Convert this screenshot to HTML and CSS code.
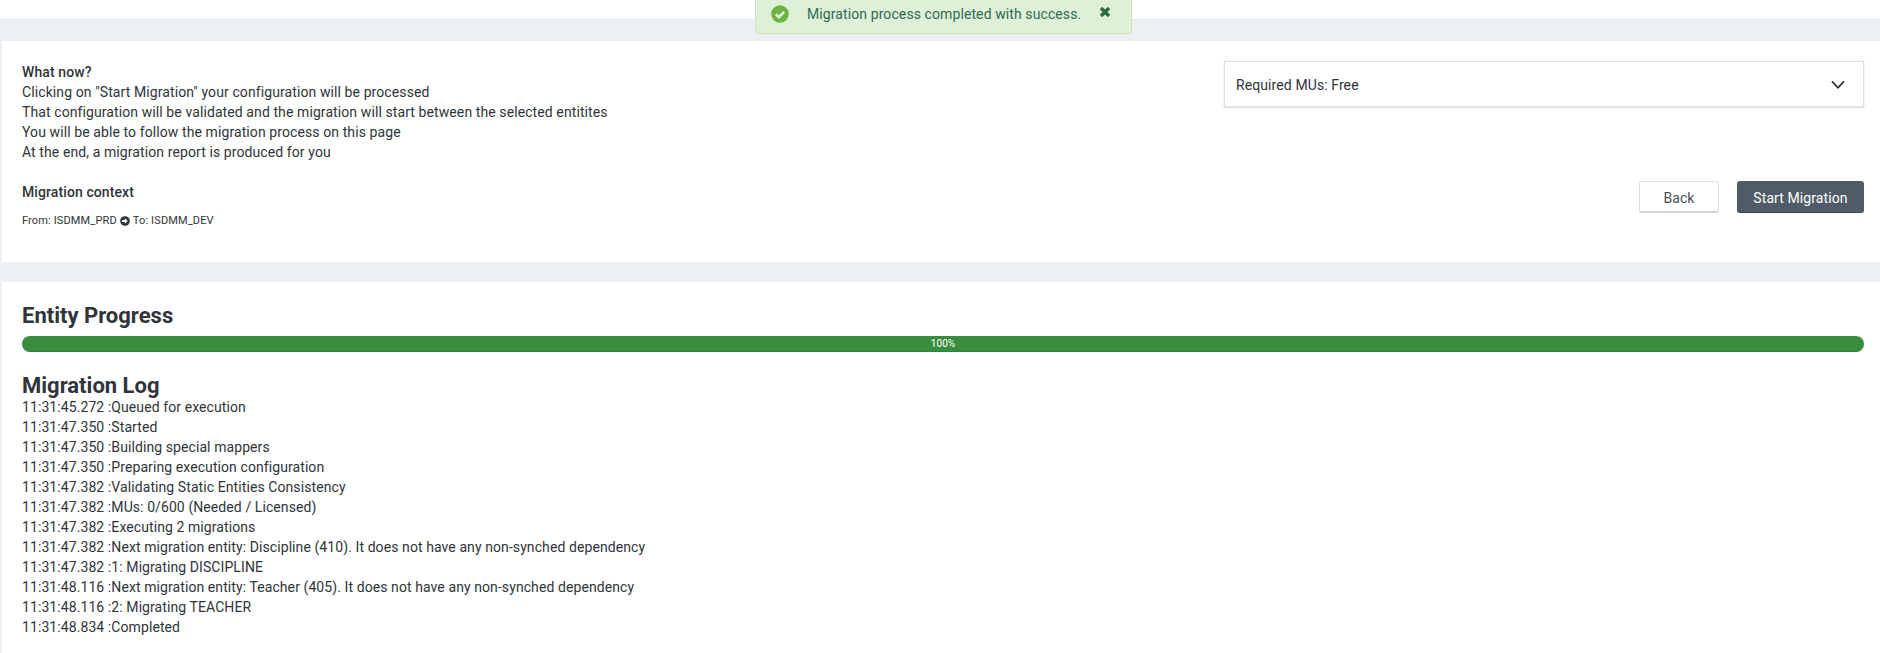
FILE: index.html
```html
<!DOCTYPE html>
<html lang="en">
<head>
<meta charset="utf-8">
<title>Migration</title>
<link rel="stylesheet" href="styles.css">
</head>
<body>
<div class="toast">
  <svg class="toast-icon" viewBox="0 0 18 18"><circle cx="9" cy="9" r="8.8" fill="#6cb33f"/><path d="M4.8 9.2l3 3L13.2 6.9" fill="none" stroke="#e6f3dc" stroke-width="2.6"/></svg>
  <span class="toast-text">Migration process completed with success.</span>
  <svg class="toast-close" viewBox="0 0 12 12"><path d="M2 2l8 8M10 2l-8 8" fill="none" stroke="#2a6b3c" stroke-width="3.4"/></svg>
</div>
<header class="topbar"></header>
<main class="content">
  <section class="card card-setup">
    <div class="intro">
      <p class="strong">What now?</p>
      <p>Clicking on "Start Migration" your configuration will be processed</p>
      <p>That configuration will be validated and the migration will start between the selected entitites</p>
      <p>You will be able to follow the migration process on this page</p>
      <p>At the end, a migration report is produced for you</p>
      <p class="strong context-title">Migration context</p>
      <p class="context"><span>From: ISDMM_PRD</span><svg class="arrow" viewBox="0 0 12 12"><circle cx="6" cy="6" r="5.8" fill="#2f343a"/><path d="M2.6 4.9h3.2V2.8L9.3 6 5.8 9.2V7.1H2.6z" fill="#fff"/></svg><span>To: ISDMM_DEV</span></p>
    </div>
    <div class="side">
      <div class="select">
        <span>Required MUs: Free</span>
        <svg class="chev" viewBox="0 0 14 10"><path d="M1 1.4L7 7.8l6-6.4" fill="none" stroke="#2f343a" stroke-width="1.8"/></svg>
      </div>
      <div class="actions">
        <button class="btn btn-back">Back</button>
        <button class="btn btn-start">Start Migration</button>
      </div>
    </div>
  </section>
  <section class="card card-log">
    <h2 class="h-progress">Entity Progress</h2>
    <div class="progress"><span>100%</span></div>
    <h2 class="h-log">Migration Log</h2>
    <div class="log">
      <div>11:31:45.272 :Queued for execution</div>
      <div>11:31:47.350 :Started</div>
      <div>11:31:47.350 :Building special mappers</div>
      <div>11:31:47.350 :Preparing execution configuration</div>
      <div>11:31:47.382 :Validating Static Entities Consistency</div>
      <div>11:31:47.382 :MUs: 0/600 (Needed / Licensed)</div>
      <div>11:31:47.382 :Executing 2 migrations</div>
      <div>11:31:47.382 :Next migration entity: Discipline (410). It does not have any non-synched dependency</div>
      <div>11:31:47.382 :1: Migrating DISCIPLINE</div>
      <div>11:31:48.116 :Next migration entity: Teacher (405). It does not have any non-synched dependency</div>
      <div>11:31:48.116 :2: Migrating TEACHER</div>
      <div>11:31:48.834 :Completed</div>
    </div>
  </section>
</main>
</body>
</html>
```
FILE: styles.css
```css
* { box-sizing: border-box; }
html, body { margin: 0; height: 100%; }
body {
  height: 653px;
  overflow: hidden;
  background: #ecf0f3;
  color: #2f343a;
  font: 14px/20px Roboto, "Liberation Sans", sans-serif;
  letter-spacing: .095px;
  display: flex;
  flex-direction: column;
}
p { margin: 0; }
.topbar { height: 20px; background: #fff; border-bottom: 1px solid #e1e5e8; flex: none; }
.toast {
  position: absolute;
  left: 755px;
  top: -1px;
  width: 377px;
  height: 35px;
  display: flex;
  align-items: center;
  background: #dff0d8;
  border: 1px solid #cfe3c2;
  border-radius: 0 0 3px 3px;
  color: #2e6b52;
  padding: 0 0 6px 15px;
  z-index: 5;
}
.toast-icon { width: 18px; height: 18px; flex: none; }
.toast-text { margin-left: 18px; font-size: 14px; }
.toast-close { width: 12px; height: 12px; margin-left: 18px; margin-top: -3px; flex: none; }
.content { flex: 1; display: flex; flex-direction: column; gap: 20px; padding: 21px 0 0 2px; }
.card { background: #fff; flex: none; }
.card-setup { height: 221px; display: flex; justify-content: space-between; padding: 21px 16px 0 20px; }
.strong { font-weight: 500; }
.context-title { margin-top: 20px; }
.context { margin-top: 9px; font-size: 11px; letter-spacing: .14px; display: flex; align-items: center; gap: 3px; }
.arrow { width: 10px; height: 10px; }
.side { width: 640px; display: flex; flex-direction: column; }
.select {
  height: 46px;
  display: flex;
  align-items: center;
  justify-content: space-between;
  padding: 1px 18px 0 11px;
  background: #fff;
  border: 1px solid #e0e0e0;
  box-shadow: 0 1px 2px rgba(0,0,0,.15);
  margin-top: -1px;
}
.chev { width: 14px; height: 10px; }
.actions { display: flex; justify-content: flex-end; gap: 18px; margin-top: 74px; }
.btn { height: 32px; font: 14px/20px Roboto, "Liberation Sans", sans-serif; letter-spacing: .095px; border-radius: 3px; padding: 2px 0 0; }
.btn-back { width: 80px; background: #fff; color: #4a5056; border: 1px solid #dcdcdc; border-bottom: 2px solid #d2d2d2; }
.btn-start { width: 127px; background: #4f5b66; color: #fff; border: 0; border-bottom: 1px solid #3f4852; }
.card-log { height: 371px; padding: 20px 16px 0 20px; }
.h-progress, .h-log { font-size: 22px; font-weight: 700; letter-spacing: 0; }
.h-progress { margin: 0; line-height: 28px; }
.progress {
  margin-top: 6px;
  height: 16px;
  background: #388e3c;
  border-bottom: 1px solid #33803a;
  border-radius: 8px;
  color: #fff;
  font-size: 10px;
  line-height: 16px;
  text-align: center;
}
.progress span { display: block; }
.h-log { margin: 21px 0 0; line-height: 26px; }
.log { margin-top: -2px; letter-spacing: .085px; }
```
